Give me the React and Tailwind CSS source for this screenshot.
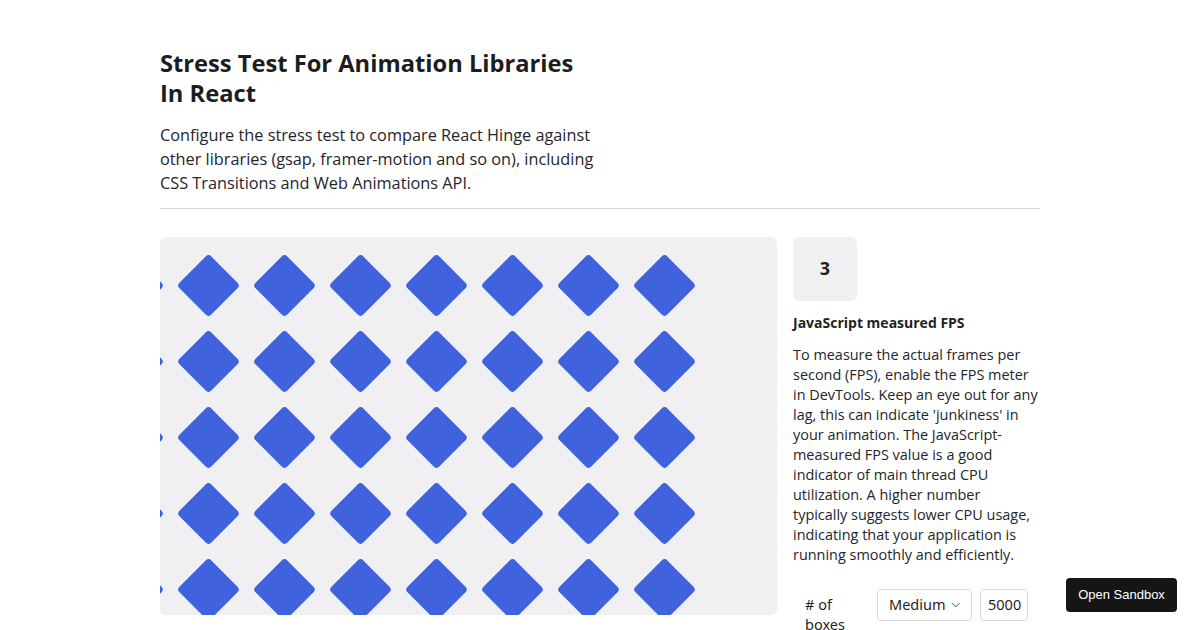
import React from "react";

const cols = Array.from({ length: 8 });
const rows = Array.from({ length: 6 });

export default function App() {
  return (
    <div className="min-h-[630px] bg-white text-[#1f1f24]" style={{ fontFamily: '"Open Sans", sans-serif' }}>
      <div className="mx-auto w-[880px] pt-[48px]">
        <h1 className="max-w-[440px] text-[23.7px] font-bold leading-[30px] text-[#1c1d22]">
          Stress Test For Animation Libraries In React
        </h1>
        <p className="mt-[15px] max-w-[450px] text-[16.3px] leading-[24px] text-[#24252b]">
          Configure the stress test to compare React Hinge against other libraries (gsap, framer-motion and so on), including CSS Transitions and Web Animations API.
        </p>
        <div className="mt-[13px] h-px bg-[#d9d9dc]" />
        <div className="mt-[28px] flex gap-[16px]">
          <div className="h-[378px] w-[617px] shrink-0 overflow-hidden rounded-[6px] bg-[#f0f0f3]">
            <div className="-ml-[66px] mt-[10px] grid w-[608px] grid-cols-8">
              {rows.map((_, r) =>
                cols.map((_, c) => (
                  <div key={`${r}-${c}`} className="flex h-[76px] w-[76px] items-center justify-center">
                    <div className="h-[45px] w-[45px] rotate-45 rounded-[4px] bg-[#4063dd]" />
                  </div>
                ))
              )}
            </div>
          </div>
          <div className="flex-1">
            <div className="flex h-[64px] w-[64px] items-center justify-center rounded-[6px] bg-[#f0f0f3] pb-[2px] text-[18px] font-bold">
              3
            </div>
            <div className="mt-[12px] text-[14px] font-bold leading-[20px]">JavaScript measured FPS</div>
            <p className="mt-[12px] w-[245px] text-[14.45px] leading-[20px] text-[#24252b]">
              To measure the actual frames per second (FPS), enable the FPS meter in DevTools. Keep an eye out for any lag, this can indicate 'junkiness' in your animation. The JavaScript-measured FPS value is a good indicator of main thread CPU utilization. A higher number typically suggests lower CPU usage, indicating that your application is running smoothly and efficiently.
            </p>
            <div className="mt-[24px] flex items-start gap-[8px] pl-[12px]" style={{ fontFamily: '"Noto Sans", sans-serif' }}>
              <div className="w-[64px] pt-[5px] text-[14.5px] leading-[20px]">
                # of boxes
              </div>
              <div className="flex h-[32px] w-[95px] items-center gap-[5px] rounded-[4px] border border-[#d9d9dc] bg-white px-[11px] text-[14.5px]">
                Medium
                <svg width="10" height="6" viewBox="0 0 10 6" fill="none">
                  <path d="M1 1l4 4 4-4" stroke="#444" strokeWidth="1" />
                </svg>
              </div>
              <div className="flex h-[32px] w-[48px] items-center rounded-[4px] border border-[#d9d9dc] bg-white px-[7px] text-[14.5px]">
                5000
              </div>
            </div>
          </div>
        </div>
      </div>
      <div
        className="fixed bottom-[18px] right-[23px] flex h-[34px] w-[111px] items-center justify-center rounded-[4px] bg-[#151515] text-[13px] text-white"
        style={{ fontFamily: '"Liberation Sans", Arial, sans-serif' }}
      >
        Open Sandbox
      </div>
    </div>
  );
}
